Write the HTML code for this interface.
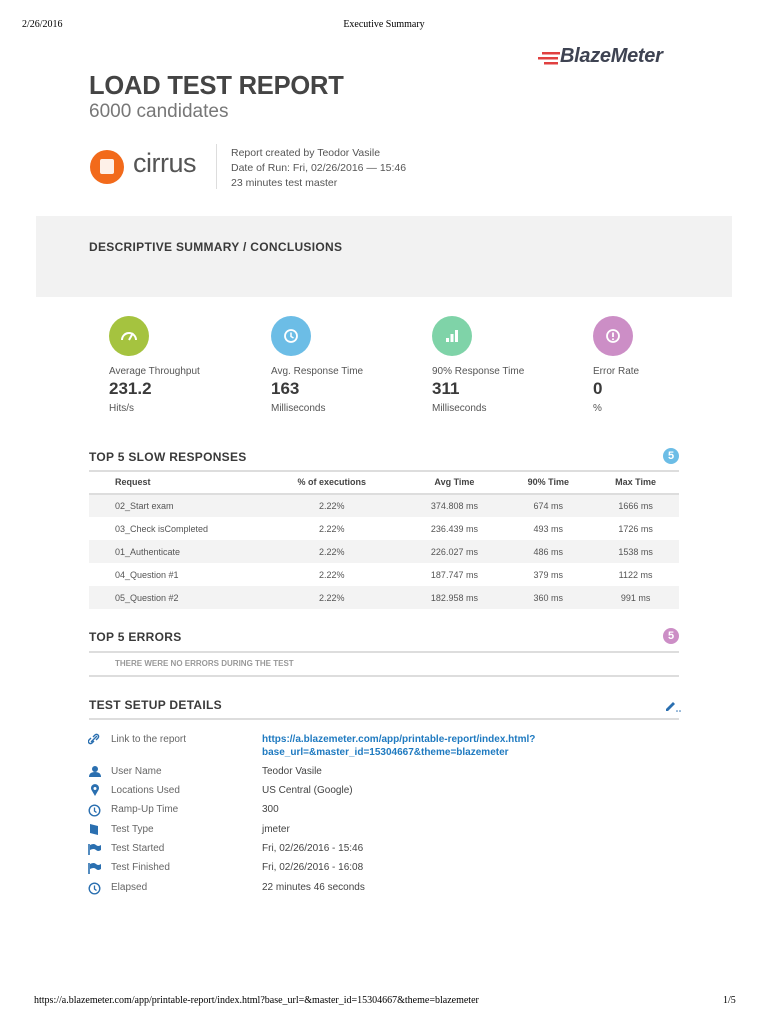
<!DOCTYPE html>
<html><head><meta charset="utf-8"><style>
*{margin:0;padding:0;box-sizing:border-box}
body{width:768px;height:1024px;background:#fff;position:relative;font-family:"Liberation Sans",sans-serif;color:#555;overflow:hidden}
.a{position:absolute;white-space:nowrap}
.ser{font-family:"Liberation Serif",serif;font-size:10px;color:#000}
.h{font-weight:bold;font-size:12px;color:#3a3a3a;letter-spacing:.3px}
.hr{position:absolute;left:89px;width:590px;height:2px;background:#ddd}
.ic{position:absolute;width:40px;height:40px;border-radius:50%}
.lab{font-size:10px;color:#555}
.big{font-size:17px;font-weight:bold;color:#3a3a3a}
table{position:absolute;left:89px;top:471px;width:590px;border-collapse:collapse;font-size:9px;color:#555}
td,th{height:23px;text-align:center}
th{font-weight:bold;color:#444;border-bottom:2px solid #ddd}
td:first-child,th:first-child{text-align:left;padding-left:26px}
tr.s td{background:#f3f3f3}
.k{font-size:10px;color:#666;left:111px}
.v{font-size:10px;color:#444;left:262px}
.badge{position:absolute;width:16px;height:16px;border-radius:50%;color:#fff;font-size:11px;font-weight:bold;text-align:center;line-height:16px}
</style></head><body>
<div class="a ser" style="left:22px;top:19px">2/26/2016</div>
<div class="a ser" style="left:250px;top:19px;width:268px;text-align:center">Executive Summary</div>
<div class="a ser" style="left:34px;top:995px">https://a.blazemeter.com/app/printable-report/index.html?base_url=&amp;master_id=15304667&amp;theme=blazemeter</div>
<div class="a ser" style="left:723px;top:995px">1/5</div>

<svg class="a" style="left:538px;top:50px" width="22" height="16"><rect x="4" y="2" width="18" height="2.5" fill="#e04040"/><rect x="0" y="7" width="20" height="2.5" fill="#e04040"/><rect x="6" y="12" width="14" height="2.5" fill="#e04040"/></svg>
<div class="a" style="left:560px;top:45px;font-size:20px;font-weight:bold;font-style:italic;color:#3e4352;letter-spacing:-.3px">BlazeMeter</div>

<div class="a" style="left:89px;top:72px;font-size:25.5px;font-weight:bold;color:#444;letter-spacing:-.2px">LOAD TEST REPORT</div>
<div class="a" style="left:89px;top:101px;font-size:19px;color:#777">6000 candidates</div>

<div class="a" style="left:90px;top:150px;width:34px;height:34px;border-radius:50%;background:#f26a1b"></div>
<div class="a" style="left:100px;top:159px;width:14px;height:15px;background:#fff;border-radius:2px;opacity:.9"></div>
<div class="a" style="left:133px;top:148px;font-size:27px;color:#555;letter-spacing:-.5px">cirrus</div>
<div class="a" style="left:216px;top:144px;width:1px;height:45px;background:#ddd"></div>
<div class="a" style="left:231px;top:146px;font-size:10.5px;color:#555;line-height:15px">Report created by Teodor Vasile<br>Date of Run: Fri, 02/26/2016 — 15:46<br>23 minutes test master</div>

<div class="a" style="left:36px;top:216px;width:696px;height:81px;background:#f2f2f2"></div>
<div class="a h" style="left:89px;top:240px">DESCRIPTIVE SUMMARY / CONCLUSIONS</div>

<div class="ic" style="left:109px;top:316px;background:#a5c33f"></div>
<svg class="a" style="left:119px;top:327px" width="20" height="16"><path d="M3 13 A7 7 0 0 1 17 13" stroke="#fff" stroke-width="2" fill="none"/><path d="M10 13 L14 6" stroke="#fff" stroke-width="2"/></svg>
<div class="ic" style="left:271px;top:316px;background:#6cbde6"></div>
<svg class="a" style="left:283px;top:328px" width="16" height="16"><circle cx="8" cy="8" r="6" stroke="#fff" stroke-width="1.8" fill="none"/><path d="M8 4.5V8.5L10.5 10" stroke="#fff" stroke-width="1.5" fill="none"/></svg>
<div class="ic" style="left:432px;top:316px;background:#7fd3a8"></div>
<svg class="a" style="left:445px;top:328px" width="14" height="16"><rect x="1" y="10" width="3" height="4" fill="#fff"/><rect x="5.5" y="6" width="3" height="8" fill="#fff"/><rect x="10" y="2" width="3" height="12" fill="#fff"/></svg>
<div class="ic" style="left:593px;top:316px;background:#cc8ec6"></div>
<svg class="a" style="left:605px;top:328px" width="16" height="16"><circle cx="8" cy="8" r="6" stroke="#fff" stroke-width="1.8" fill="none"/><path d="M8 4.5V9" stroke="#fff" stroke-width="1.8"/><circle cx="8" cy="11.2" r="1" fill="#fff"/></svg>

<div class="a lab" style="left:109px;top:366px">Average Throughput</div>
<div class="a big" style="left:109px;top:379px">231.2</div>
<div class="a lab" style="left:109px;top:403px">Hits/s</div>
<div class="a lab" style="left:271px;top:366px">Avg. Response Time</div>
<div class="a big" style="left:271px;top:379px">163</div>
<div class="a lab" style="left:271px;top:403px">Milliseconds</div>
<div class="a lab" style="left:432px;top:366px">90% Response Time</div>
<div class="a big" style="left:432px;top:379px">311</div>
<div class="a lab" style="left:432px;top:403px">Milliseconds</div>
<div class="a lab" style="left:593px;top:366px">Error Rate</div>
<div class="a big" style="left:593px;top:379px">0</div>
<div class="a lab" style="left:593px;top:403px">%</div>

<div class="a h" style="left:89px;top:450px">TOP 5 SLOW RESPONSES</div>
<div class="badge" style="left:663px;top:448px;background:#6cbde6">5</div>
<div class="hr" style="top:470px"></div>
<table>
<tr><th style="width:170px">Request</th><th>% of executions</th><th>Avg Time</th><th>90% Time</th><th>Max Time</th></tr>
<tr class="s"><td>02_Start exam</td><td>2.22%</td><td>374.808 ms</td><td>674 ms</td><td>1666 ms</td></tr>
<tr><td>03_Check isCompleted</td><td>2.22%</td><td>236.439 ms</td><td>493 ms</td><td>1726 ms</td></tr>
<tr class="s"><td>01_Authenticate</td><td>2.22%</td><td>226.027 ms</td><td>486 ms</td><td>1538 ms</td></tr>
<tr><td>04_Question #1</td><td>2.22%</td><td>187.747 ms</td><td>379 ms</td><td>1122 ms</td></tr>
<tr class="s"><td>05_Question #2</td><td>2.22%</td><td>182.958 ms</td><td>360 ms</td><td>991 ms</td></tr>
</table>

<div class="a h" style="left:89px;top:630px">TOP 5 ERRORS</div>
<div class="badge" style="left:663px;top:628px;background:#cc8ec6">5</div>
<div class="hr" style="top:651px"></div>
<div class="a" style="left:115px;top:659px;font-size:8px;color:#999;font-weight:bold">THERE WERE NO ERRORS DURING THE TEST</div>
<div class="hr" style="top:675px"></div>

<div class="a h" style="left:89px;top:698px">TEST SETUP DETAILS</div>
<svg class="a" style="left:664px;top:699px" width="18" height="14"><path d="M2 10L9 3L11 5L4 12H2Z" fill="#2a6fb0"/><circle cx="13" cy="12" r=".8" fill="#2a6fb0"/><circle cx="16" cy="12" r=".8" fill="#2a6fb0"/></svg>
<div class="hr" style="top:718px"></div>

<svg class="a" style="left:88px;top:733px" width="14" height="12"><path d="M3 9L9 3M5 4L7 2a2 2 0 0 1 3 3L8 7M6 8L4 10a2 2 0 0 1-3-3L3 5" stroke="#2a6fb0" stroke-width="1.4" fill="none"/></svg>
<div class="a k" style="top:734px">Link to the report</div>
<div class="a v" style="top:733px;color:#1f7ac0;font-weight:bold;line-height:13px">https://a.blazemeter.com/app/printable-report/index.html?<br>base_url=&amp;master_id=15304667&amp;theme=blazemeter</div>

<svg class="a" style="left:88px;top:765px" width="14" height="13"><circle cx="7" cy="4" r="3" fill="#2a6fb0"/><path d="M1 12Q1 7 7 7Q13 7 13 12Z" fill="#2a6fb0"/></svg>
<div class="a k" style="top:766px">User Name</div><div class="a v" style="top:766px">Teodor Vasile</div>
<svg class="a" style="left:90px;top:784px" width="10" height="13"><path d="M5 12L1.5 6A4 4 0 1 1 8.5 6Z" fill="#2a6fb0"/><circle cx="5" cy="4.5" r="1.5" fill="#fff"/></svg>
<div class="a k" style="top:785px">Locations Used</div><div class="a v" style="top:785px">US Central (Google)</div>
<svg class="a" style="left:88px;top:804px" width="13" height="13"><circle cx="6.5" cy="6.5" r="5.3" stroke="#2a6fb0" stroke-width="1.4" fill="none"/><path d="M6.5 3.5V7L8.5 8.5" stroke="#2a6fb0" stroke-width="1.3" fill="none"/></svg>
<div class="a k" style="top:804px">Ramp-Up Time</div><div class="a v" style="top:804px">300</div>
<svg class="a" style="left:89px;top:823px" width="11" height="13"><path d="M1 1L9 3V12L1 10Z" fill="#2a6fb0"/></svg>
<div class="a k" style="top:824px">Test Type</div><div class="a v" style="top:824px">jmeter</div>
<svg class="a" style="left:88px;top:843px" width="14" height="13"><path d="M1 1V12" stroke="#2a6fb0" stroke-width="1.6"/><path d="M2 2Q6 0 8 2Q10 4 13 2V7Q10 9 8 7Q6 5 2 7Z" fill="#2a6fb0"/></svg>
<div class="a k" style="top:843px">Test Started</div><div class="a v" style="top:843px">Fri, 02/26/2016 - 15:46</div>
<svg class="a" style="left:88px;top:862px" width="14" height="13"><path d="M1 1V12" stroke="#2a6fb0" stroke-width="1.6"/><path d="M2 2Q6 0 8 2Q10 4 13 2V7Q10 9 8 7Q6 5 2 7Z" fill="#2a6fb0"/></svg>
<div class="a k" style="top:862px">Test Finished</div><div class="a v" style="top:862px">Fri, 02/26/2016 - 16:08</div>
<svg class="a" style="left:88px;top:882px" width="13" height="13"><circle cx="6.5" cy="6.5" r="5.3" stroke="#2a6fb0" stroke-width="1.4" fill="none"/><path d="M6.5 3.5V7L8.5 8.5" stroke="#2a6fb0" stroke-width="1.3" fill="none"/></svg>
<div class="a k" style="top:882px">Elapsed</div><div class="a v" style="top:882px">22 minutes 46 seconds</div>
</body></html>
